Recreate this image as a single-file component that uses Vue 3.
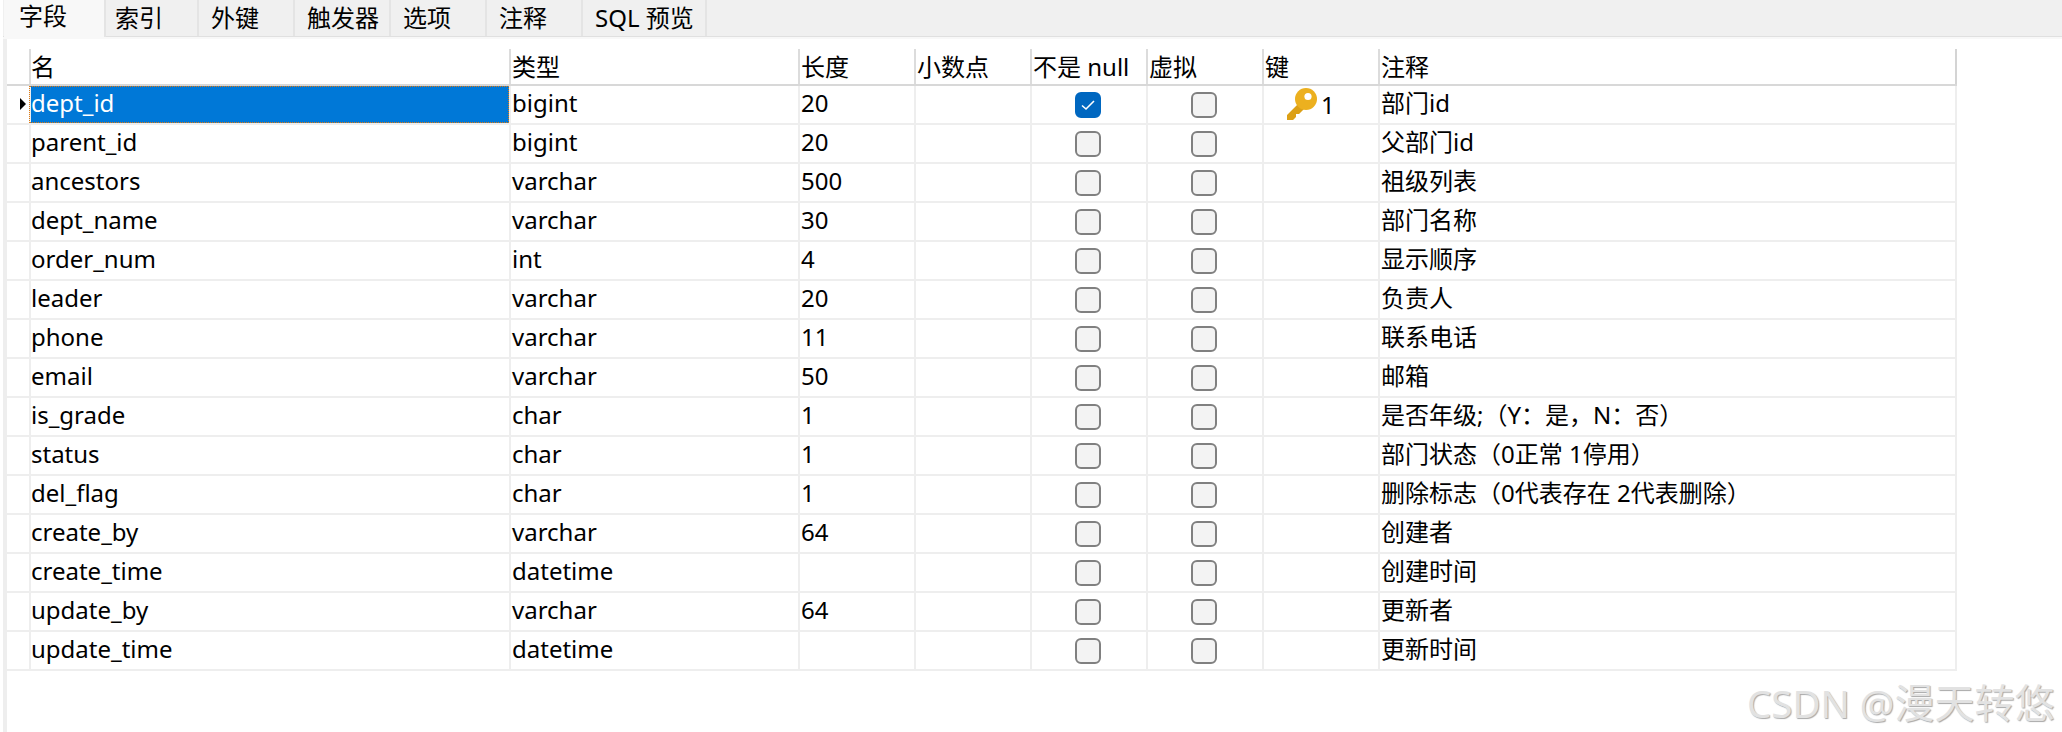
<script setup>
const tabs = ['字段', '索引', '外键', '触发器', '选项', '注释', 'SQL 预览']
const heads = ['名', '类型', '长度', '小数点', '不是 null', '虚拟', '键', '注释']
const rows = [
  ['dept_id', 'bigint', '20', true, '部门id'],
  ['parent_id', 'bigint', '20', false, '父部门id'],
  ['ancestors', 'varchar', '500', false, '祖级列表'],
  ['dept_name', 'varchar', '30', false, '部门名称'],
  ['order_num', 'int', '4', false, '显示顺序'],
  ['leader', 'varchar', '20', false, '负责人'],
  ['phone', 'varchar', '11', false, '联系电话'],
  ['email', 'varchar', '50', false, '邮箱'],
  ['is_grade', 'char', '1', false, '是否年级;（Y：是，N：否）'],
  ['status', 'char', '1', false, '部门状态（0正常 1停用）'],
  ['del_flag', 'char', '1', false, '删除标志（0代表存在 2代表删除）'],
  ['create_by', 'varchar', '64', false, '创建者'],
  ['create_time', 'datetime', '', false, '创建时间'],
  ['update_by', 'varchar', '64', false, '更新者'],
  ['update_time', 'datetime', '', false, '更新时间'],
]
</script>

<template>
  <div class="page">
    <div class="tabs">
      <div v-for="(t, i) in tabs" :key="t" class="tab" :class="{ active: i === 0 }">{{ t }}</div>
    </div>
    <div class="strip"></div>
    <div class="body">
      <div class="grid">
        <div class="row head">
          <div class="gutter"></div>
          <div v-for="h in heads" :key="h" class="cell">{{ h }}</div>
        </div>
        <div v-for="(r, i) in rows" :key="r[0]" class="row">
          <div class="gutter"><span v-if="i === 0" class="arrow"></span></div>
          <div class="cell" :class="{ selected: i === 0 }">{{ r[0] }}</div>
          <div class="cell">{{ r[1] }}</div>
          <div class="cell">{{ r[2] }}</div>
          <div class="cell"></div>
          <div class="cell center">
            <span class="check" :class="{ on: r[3] }">
              <svg v-if="r[3]" width="16" height="12" viewBox="0 0 16 12"><path d="M2 6.5 L6 10 L14 2" fill="none" stroke="#fff" stroke-width="1.6"/></svg>
            </span>
          </div>
          <div class="cell center"><span class="check"></span></div>
          <div class="cell keycell">
            <template v-if="i === 0">
              <svg class="key" width="32" height="33" viewBox="0 0 32 33">
                <path d="M13 15 L1 27 L1 32 L7 32 L10 29 L10 26 L13 26 L18 21 Z" fill="#dca016"/>
                <circle cx="20" cy="11" r="11" fill="#ecb01f"/>
                <circle cx="22" cy="8.5" r="3.6" fill="#fff"/>
              </svg>
              <span>1</span>
            </template>
          </div>
          <div class="cell">{{ r[4] }}</div>
        </div>
      </div>
    </div>
    <div class="mark"><span class="mark-latin">CSDN @</span>漫天转悠</div>
  </div>
</template>

<style scoped>
.page {
  position: relative;
  width: 2062px;
  height: 732px;
  background: #fff;
  overflow: hidden;
  font-family: "Noto Sans", "Noto Sans CJK SC", sans-serif;
  font-size: 24px;
  color: #000;
}
.tabs {
  display: flex;
  height: 37px;
  box-sizing: border-box;
  margin-left: 3px;
  padding-left: 1px;
  background: #f0f0f0;
  border-bottom: 1px solid #e0e0e0;
}
.strip {
  height: 2px;
  margin-left: 3px;
  background: #f8f8f8;
}
.tab {
  width: 96px;
  height: 36px;
  box-sizing: border-box;
  padding-left: 12px;
  line-height: 35px;
  white-space: nowrap;
  border-right: 2px solid #e4e4e4;
}
.tab.active {
  width: 102px;
  height: 37px;
  padding-left: 15px;
  line-height: 32px;
  background: #f8f8f8;
}
.tab:nth-child(2) {
  width: 93px;
  padding-left: 9px;
}
.tab:last-child {
  width: 124px;
}
.body {
  height: 693px;
  margin-left: 3px;
  padding-top: 10px;
  box-sizing: border-box;
  border-left: 4px solid #eee;
}
.grid {
  width: 1950px;
}
.row {
  display: grid;
  grid-template-columns: 22px 480px 289px 116px 116px 116px 116px 116px 579px;
  height: 39px;
  box-sizing: border-box;
  border-bottom: 2px solid #eee;
}
.row.head {
  height: 37px;
  border-bottom-color: #d8d8d8;
}
.gutter {
  position: relative;
}
.arrow {
  position: absolute;
  left: 13px;
  top: 12px;
  border-left: 6px solid #000;
  border-top: 6px solid transparent;
  border-bottom: 6px solid transparent;
}
.cell {
  box-sizing: border-box;
  border-left: 2px solid #eee;
  padding-left: 1px;
  line-height: 33px;
  white-space: nowrap;
  overflow: hidden;
}
.cell:nth-child(2) {
  padding-left: 0;
}
.cell:last-child {
  border-right: 2px solid #eee;
}
.head .cell {
  line-height: 36px;
  border-left-color: #dcdcdc;
}
.head .cell:last-child {
  border-right-color: #d4d4d4;
}
.selected {
  background: #0078d7;
  color: #fff;
  outline: 1px dotted #e07a10;
  outline-offset: -1px;
}
.center {
  display: flex;
  align-items: center;
  justify-content: center;
  padding-left: 0;
  padding-right: 2px;
}
.check {
  display: flex;
  align-items: center;
  justify-content: center;
  width: 26px;
  height: 26px;
  box-sizing: border-box;
  border: 2px solid #808080;
  border-radius: 6px;
  background: #f3f3f3;
}
.check.on {
  background: #0067c0;
  border-color: #0067c0;
}
.keycell {
  display: flex;
  align-items: center;
  padding-left: 22px;
  gap: 3px;
}
.mark {
  position: absolute;
  left: 1747px;
  top: 678px;
  font-size: 40px;
  line-height: 50px;
  white-space: nowrap;
  color: #e2e2e2;
  text-shadow: 1px 1px 1px #a8a8a8;
}
.mark-latin {
  font-size: 38.5px;
}
</style>
